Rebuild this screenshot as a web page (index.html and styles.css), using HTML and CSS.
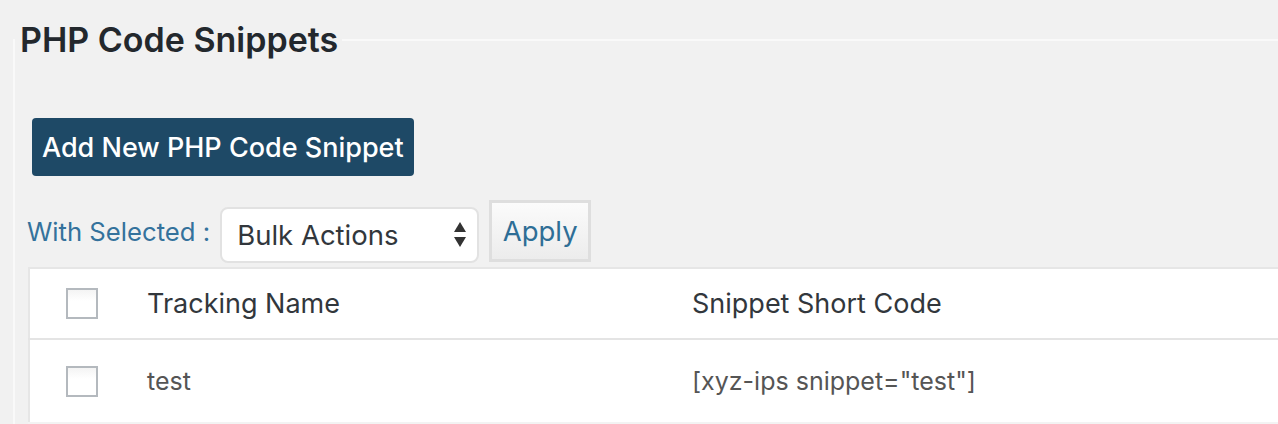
FILE: index.html
```html
<!DOCTYPE html>
<html>
<head>
<meta charset="utf-8">
<title>PHP Code Snippets</title>
<link rel="stylesheet" href="styles.css">
</head>
<body>
<fieldset class="panel">
  <legend class="panel-title">PHP Code Snippets</legend>
  <div class="actions">
    <a class="btn-primary" href="#">Add New PHP Code Snippet</a>
  </div>
  <div class="bulk-row">
    <span class="bulk-label">With Selected :</span>
    <div class="select-box">
      <span class="select-text">Bulk Actions</span>
      <svg class="select-arrows" width="14" height="26" viewBox="0 0 14 26">
        <polygon points="7,0 13,10 1,10" fill="#333"/>
        <polygon points="1,15 13,15 7,25" fill="#333"/>
      </svg>
    </div>
    <button class="btn-apply" type="button">Apply</button>
  </div>
  <table class="snippets">
    <thead>
      <tr>
        <th class="col-check"><span class="checkbox"></span></th>
        <th class="col-name">Tracking Name</th>
        <th class="col-code">Snippet Short Code</th>
      </tr>
    </thead>
    <tbody>
      <tr>
        <td class="col-check"><span class="checkbox"></span></td>
        <td class="col-name cell-muted">test</td>
        <td class="col-code cell-muted">[xyz-ips snippet="test"]</td>
      </tr>
    </tbody>
  </table>
</fieldset>
</body>
</html>
```

FILE: styles.css
```css
html, body {
  margin: 0;
  padding: 0;
  background: #f1f1f1;
  overflow: hidden;
}

body {
  font-family: "Inter", "Liberation Sans", sans-serif;
  color: #32373c;
}

.panel {
  margin: 21px 0 0 13px;
  padding: 0;
  border: 2px solid #f9f9f9;
  border-right: none;
  border-bottom: none;
  min-width: 0;
}

.panel-title {
  padding: 0 4px 0 5px;
  font-size: 34px;
  line-height: 38px;
  font-weight: 600;
  color: #23282d;
}

.actions {
  margin: 59px 0 0 17px;
}

.btn-primary {
  display: inline-flex;
  align-items: center;
  height: 58px;
  box-sizing: border-box;
  padding: 0 10px;
  background: #1e4966;
  color: #fff;
  border-radius: 4px;
  font-size: 27px;
  font-weight: 500;
  text-decoration: none;
}

.bulk-row {
  display: flex;
  align-items: flex-start;
  margin: 24px 0 0 12px;
}

.bulk-label {
  margin-top: 17px;
  font-size: 25.7px;
  line-height: 30px;
  color: #34729c;
}

.select-box {
  display: flex;
  align-items: center;
  justify-content: space-between;
  box-sizing: border-box;
  width: 259px;
  height: 56px;
  margin: 7px 0 0 10px;
  padding: 0 10px 0 15px;
  background: #fff;
  border: 2px solid #e2e2e2;
  border-radius: 8px;
  font-size: 27.5px;
  color: #32373c;
}

.btn-apply {
  box-sizing: border-box;
  width: 102px;
  height: 62px;
  margin-left: 10px;
  padding: 0;
  border: 3px solid #dedede;
  background: linear-gradient(#fbfbfb, #ececec);
  font-family: inherit;
  font-size: 27.5px;
  color: #2e6e96;
}

.snippets {
  width: 1250px;
  margin: 4px 0 0 13px;
  border-collapse: collapse;
  background: #fff;
  border-top: 2px solid #e6e6e6;
  border-left: 2px solid #e6e6e6;
  text-align: left;
}

.snippets th {
  height: 69px;
  padding: 0;
  font-size: 27px;
  font-weight: 400;
  color: #32373c;
  border-bottom: 2px solid #e4e4e4;
}

.snippets td {
  height: 82px;
  padding: 0;
  font-size: 25px;
  border-bottom: 2px solid #f3f3f3;
}

.col-check {
  width: 117px;
}

.col-name {
  width: 545px;
}

.checkbox {
  display: block;
  box-sizing: border-box;
  width: 32px;
  height: 31px;
  margin-left: 36px;
  border: 2px solid #b4b9be;
  background: linear-gradient(#f4f4f4, #fff 40%);
}

.cell-muted {
  color: #555;
}
```
